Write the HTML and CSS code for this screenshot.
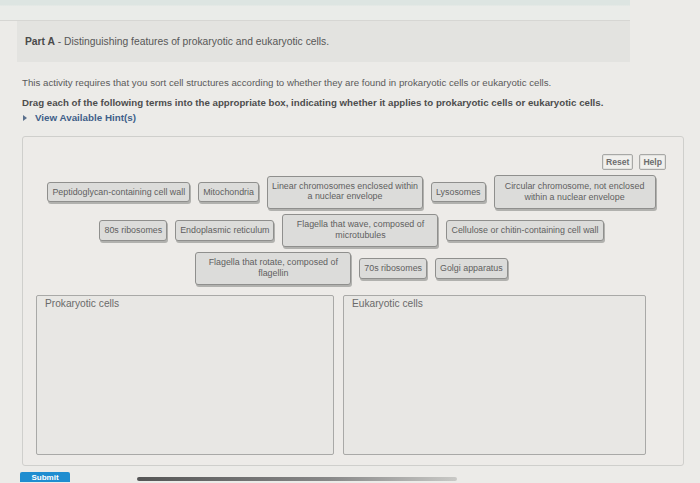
FILE: index.html
```html
<!DOCTYPE html>
<html>
<head>
    <meta charset="utf-8">
    <meta name="viewport" content="width=device-width, initial-scale=1.0">
    <link rel="stylesheet" href="styles.css">
</head>
<body>
<div class="top_band"></div>
<div class="part_title"><b>Part A</b> - Distinguishing features of prokaryotic and eukaryotic cells.</div>

<div class="question">
    <p class="intro">This activity requires that you sort cell structures according to whether they are found in prokaryotic cells or eukaryotic cells.</p>
    <p class="task">Drag each of the following terms into the appropriate box, indicating whether it applies to prokaryotic cells or eukaryotic cells.</p>
    <div class="hint"><i class="arrow"></i>View Available Hint(s)</div>

    <div class="sort_box">
        <div class="tools">
            <button type="button" class="tool_btn">Reset</button>
            <button type="button" class="tool_btn">Help</button>
        </div>

        <div class="tile_row">
            <div class="tile">Peptidoglycan-containing cell wall</div>
            <div class="tile">Mitochondria</div>
            <div class="tile wide">Linear chromosomes enclosed within a nuclear envelope</div>
            <div class="tile">Lysosomes</div>
            <div class="tile wider">Circular chromosome, not enclosed within a nuclear envelope</div>
        </div>
        <div class="tile_row">
            <div class="tile">80s ribosomes</div>
            <div class="tile">Endoplasmic reticulum</div>
            <div class="tile wide">Flagella that wave, composed of microtubules</div>
            <div class="tile">Cellulose or chitin-containing cell wall</div>
        </div>
        <div class="tile_row">
            <div class="tile wide">Flagella that rotate, composed of flagellin</div>
            <div class="tile">70s ribosomes</div>
            <div class="tile">Golgi apparatus</div>
        </div>

        <div class="bins">
            <div class="bin">Prokaryotic cells</div>
            <div class="bin">Eukaryotic cells</div>
        </div>
    </div>

    <div class="bottom_bar">
        <button type="button" class="submit">Submit</button>
        <span class="shade"></span>
    </div>
</div>
</body>
</html>
```

FILE: styles.css
```css
* {
    box-sizing: border-box;
}

body {
    margin: 0;
    height: 483px;
    overflow: hidden;
    background-color: #ecebe8;
    font-family: "Liberation Sans", Arial, sans-serif;
    color: #5a5a5a;
}

.top_band {
    height: 21px;
    width: 630px;
    background: linear-gradient(#dde5e2 0, #dde5e2 5px, #eaece9 6px);
    border-bottom: 1px solid #d6d6d3;
}

.part_title {
    width: 613px;
    height: 41px;
    margin-left: 17px;
    padding: 15px 0 0 8px;
    background-color: #e3e3e0;
    font-size: 10.3px;
    color: #575757;
}

.part_title b {
    color: #4a4a4a;
}

.question {
    padding: 0 0 0 22px;
}

.question p {
    margin: 0;
    font-size: 9.7px;
    line-height: 12px;
}

.question .intro {
    margin-top: 15px;
}

.question .task {
    margin-top: 8px;
    font-weight: bold;
    color: #4d4d4d;
}

.hint {
    display: flex;
    align-items: center;
    margin-top: 3px;
    font-size: 9.8px;
    font-weight: bold;
    color: #3f5f8a;
}

.hint .arrow {
    width: 0;
    height: 0;
    margin: 0 8px 0 1px;
    border-top: 3px solid transparent;
    border-bottom: 3px solid transparent;
    border-left: 4px solid #5a6f8c;
}

.sort_box {
    width: 662px;
    height: 330px;
    margin-top: 13px;
    padding: 17px 16px 0 13px;
    border: 1px solid #cfcfcc;
    border-radius: 3px;
    background-color: #edebe8;
}

.tools {
    display: flex;
    justify-content: flex-end;
    gap: 6px;
    padding-right: 1px;
}

.tool_btn {
    height: 16px;
    padding: 0 3px;
    border: 1px solid #a8a8a6;
    border-radius: 2px;
    background-color: #f1f0ed;
    box-shadow: inset 0 0 0 1px #e2e2df;
    font-family: inherit;
    font-size: 8.6px;
    font-weight: bold;
    color: #6d6d6d;
}

.tile_row {
    display: flex;
    justify-content: center;
    align-items: center;
    gap: 8px;
    margin-top: 5px;
}

.tile_row + .tile_row {
    margin-top: 5px;
}

.tile {
    padding: 4px 4px;
    border: 1px solid #8f8f8d;
    border-radius: 3px;
    background-color: #dcdcda;
    box-shadow: 1px 2px 0 #b1b1ae;
    font-size: 8.9px;
    line-height: 10.5px;
    text-align: center;
    color: #5f5f5f;
    white-space: nowrap;
}

.tile.wide {
    width: 156px;
    white-space: normal;
    padding: 4px 2px 6px;
}

.tile.wider {
    width: 162px;
    white-space: normal;
    padding: 5px 4px 6px;
}

.bins {
    display: grid;
    grid-template-columns: 298px 303px;
    gap: 9px;
    margin-top: 10px;
}

.bin {
    height: 160px;
    padding: 2px 8px;
    border: 1px solid #a9a9a7;
    border-radius: 2px;
    background-color: #e8e7e4;
    font-size: 10.2px;
    color: #6a6a6a;
}

.bottom_bar {
    display: flex;
    align-items: flex-start;
    gap: 67px;
    height: 10px;
    margin: 6px 0 0 -2px;
}

.submit {
    width: 50px;
    height: 10px;
    padding: 0;
    border: 0;
    border-radius: 2px 2px 0 0;
    background-color: #1f8dd0;
    font-family: inherit;
    font-size: 8px;
    font-weight: bold;
    line-height: 11px;
    color: #fff;
    overflow: hidden;
}

.shade {
    width: 320px;
    height: 4px;
    margin-top: 5px;
    border-radius: 2px;
    background: linear-gradient(90deg, #555, #888 60%, #c9c9c6);
}
```
